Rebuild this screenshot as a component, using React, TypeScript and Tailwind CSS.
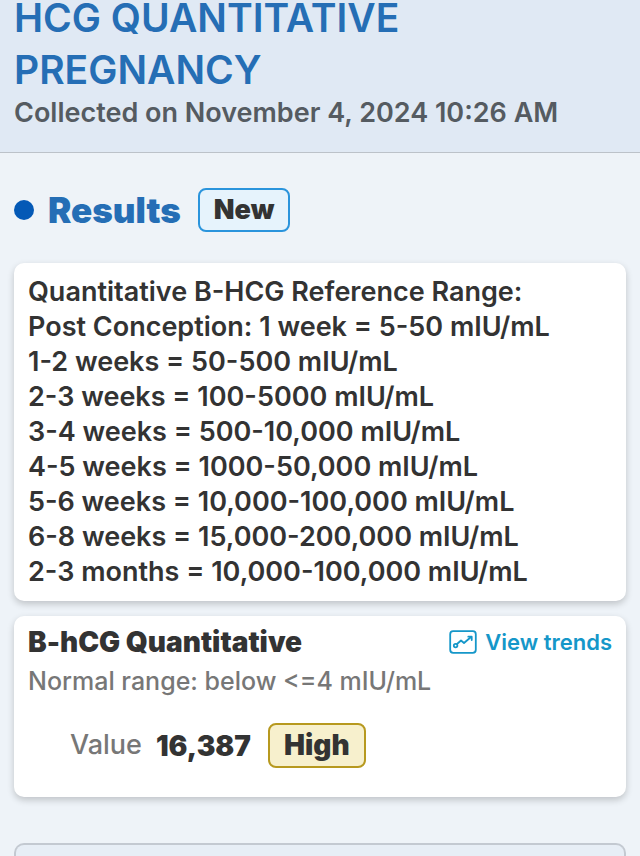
import React from 'react'

const ranges = [
    'Quantitative B-HCG Reference Range:',
    'Post Conception: 1 week = 5-50 mIU/mL',
    '1-2 weeks = 50-500 mIU/mL',
    '2-3 weeks = 100-5000 mIU/mL',
    '3-4 weeks = 500-10,000 mIU/mL',
    '4-5 weeks = 1000-50,000 mIU/mL',
    '5-6 weeks = 10,000-100,000 mIU/mL',
    '6-8 weeks = 15,000-200,000 mIU/mL',
    '2-3 months = 10,000-100,000 mIU/mL',
]

const TrendIcon = () => (
    <svg className="w-7 h-6 shrink-0" viewBox="0 0 28 24" fill="none" stroke="currentColor" strokeWidth="1.8" strokeLinecap="round" strokeLinejoin="round" aria-hidden="true">
        <rect x="1.2" y="1.2" width="25.6" height="21.6" rx="3" />
        <circle cx="6.6" cy="15.6" r="1.8" />
        <path d="M8 14L12 10.5L15 13L22 7" />
        <path d="M19.3 6.7H22.7V10.1" />
    </svg>
)

const App = () => {
    return (
        <div className="min-h-screen overflow-hidden bg-[#eef3f8] font-['Inter',sans-serif] text-[#333]">
            <header className="bg-[#e0e9f4] border-b border-[#bcc2c9] px-[14px] pb-[22px]">
                <h1 className="-mt-2 text-[39px] leading-[52px] font-semibold text-[#256eb5]">
                    HCG QUANTITATIVE<br />PREGNANCY
                </h1>
                <p className="text-[27px] leading-[34px] font-semibold text-[#555b61]">Collected on November 4, 2024 10:26 AM</p>
            </header>

            <main className="px-[14px] pt-[35px]">
                <div className="flex items-center">
                    <span className="size-5 rounded-full bg-[#0459b6]" />
                    <h2 className="ml-[14px] text-[35px] leading-11 font-black text-[#256eb5]">Results</h2>
                    <span className="ml-[17px] rounded-lg border-2 border-[#2a94dc] bg-[#e6f3fc] px-[14px] text-[27px] leading-10 font-black">New</span>
                </div>

                <section className="mt-[31px] rounded-[10px] bg-white px-[14px] pt-[11px] pb-3 text-[27px] leading-[35px] font-semibold shadow-[0_3px_7px_rgba(0,0,0,0.2)]">
                    {ranges.map((range) => (
                        <p key={range}>{range}</p>
                    ))}
                </section>

                <section className="mt-[15px] rounded-[10px] bg-white px-[14px] pt-2 pb-[29px] shadow-[0_3px_7px_rgba(0,0,0,0.2)]">
                    <div className="flex items-center justify-between">
                        <h3 className="text-[28px] leading-9 font-black">B-hCG Quantitative</h3>
                        <a href="#trends" className="flex items-center gap-2 text-[22px] font-semibold text-[#1597c9]">
                            <TrendIcon />
                            View trends
                        </a>
                    </div>
                    <p className="mt-1 text-[25px] leading-[34px] font-medium text-[#777]">Normal range: below &lt;=4 mIU/mL</p>
                    <div className="mt-[25px] ml-[42px] flex items-center">
                        <span className="text-[27px] font-medium text-[#777]">Value</span>
                        <span className="ml-[14px] text-[28px] font-black">16,387</span>
                        <span className="ml-[17px] rounded-lg border-2 border-[#b7991f] bg-[#f7f0cd] px-[14px] text-[28px] leading-[41px] font-black">High</span>
                    </div>
                </section>

                <section className="mt-[46px] h-4 rounded-t-[10px] border-2 border-b-0 border-[#c3c9d1] bg-[#e7eef6]" />
            </main>
        </div>
    )
}

export default App
